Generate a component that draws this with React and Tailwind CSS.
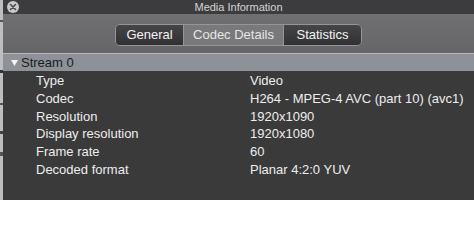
import React from "react";

const rows = [
  ["Type", "Video"],
  ["Codec", "H264 - MPEG-4 AVC (part 10) (avc1)"],
  ["Resolution", "1920x1090"],
  ["Display resolution", "1920x1080"],
  ["Frame rate", "60"],
  ["Decoded format", "Planar 4:2:0 YUV"],
];

export default function App() {
  return (
    <div className="flex w-[474px] h-[200px] overflow-hidden font-['Liberation_Sans',Arial,sans-serif] antialiased">
      {/* sliver of background window */}
      <div className="w-[3px] shrink-0 bg-[#bebec0] flex flex-col">
        <div className="h-[20px]" />
        <div className="h-[2px] bg-[#555]" />
        <div className="h-[48px]" />
        <div className="h-[3px] bg-[#333]" />
        <div className="h-[30px]" />
        <div className="h-[2px] bg-[#555]" />
        <div className="h-[26px]" />
        <div className="h-[3px] bg-[#444]" />
        <div className="h-[18px]" />
        <div className="h-[4px] bg-[#555]" />
      </div>

      <div className="flex-1 flex flex-col min-w-0">
        {/* title bar */}
        <div className="relative h-[14px] bg-[#3c3c3e] flex items-center justify-center">
          <div className="absolute left-[4px] top-[1px] w-[12px] h-[12px] rounded-full bg-[#c9c9c9] flex items-center justify-center">
            <svg width="8" height="8" viewBox="0 0 8 8">
              <path d="M1.5 1.5 L6.5 6.5 M6.5 1.5 L1.5 6.5" stroke="#4a4a4a" strokeWidth="1.6" strokeLinecap="round" />
            </svg>
          </div>
          <span className="text-[11px] leading-[14px] text-[#d4d4d4]">Media Information</span>
        </div>

        {/* toolbar */}
        <div className="h-[39px] bg-gradient-to-b from-[#707072] to-[#666668] flex items-center justify-center pt-[2px]">
          <div className="flex h-[22px] rounded-[5px] border border-[#959597] overflow-hidden text-[13px] leading-[20px]">
            <div className="w-[67px] bg-gradient-to-b from-[#454547] to-[#313133] text-[#f4f4f4] flex items-center justify-center">
              General
            </div>
            <div className="w-[101px] border-l border-r border-[#959597] bg-[#79797b] text-[#e6e6e6] flex items-center justify-center">
              Codec Details
            </div>
            <div className="w-[77px] bg-gradient-to-b from-[#454547] to-[#313133] text-[#f4f4f4] flex items-center justify-center">
              Statistics
            </div>
          </div>
        </div>

        {/* stream header */}
        <div className="h-[18px] bg-[#8e9298] border-t border-[#b6b8bb] flex items-center pl-[8px] text-[13px] text-[#1b1b1c]">
          <svg width="7" height="6" viewBox="0 0 7 6" className="mr-[3px]">
            <path d="M0 0 H7 L3.5 6 Z" fill="#f4f4f4" />
          </svg>
          <span>Stream 0</span>
        </div>

        {/* content */}
        <div className="flex-1 bg-[#3a3a3b] pt-[1px] pl-[33px] text-[13px] leading-[17.8px] text-[#ededed]">
          {rows.map(([k, v]) => (
            <div key={k} className="grid grid-cols-[214px_1fr] whitespace-nowrap">
              <span>{k}</span>
              <span>{v}</span>
            </div>
          ))}
        </div>
      </div>
    </div>
  );
}
